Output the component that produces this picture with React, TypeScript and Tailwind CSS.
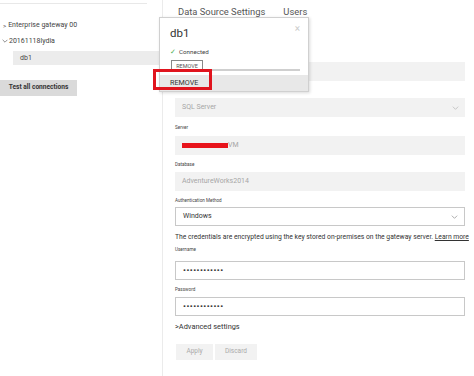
import React from 'react';

const Chevron = ({ className }: { className?: string }) => (
  <svg viewBox="0 0 10 6" className={className} fill="none" stroke="currentColor" strokeWidth="1.2">
    <path d="M1 1l4 4 4-4" />
  </svg>
);

const Label = ({ text, className }: { text: string; className?: string }) => (
  <div className={`h-[10px] text-[4.6px] leading-[10px] text-[#444] ${className ?? ''}`}>{text}</div>
);

const GrayField = ({ children, className }: { children?: React.ReactNode; className?: string }) => (
  <div className={`h-[19px] w-[290px] shrink-0 bg-[#f2f2f2] flex items-center pl-[7px] text-[7px] text-[#a6a6a6] ${className ?? ''}`}>
    {children}
  </div>
);

const WhiteField = ({ children, className }: { children?: React.ReactNode; className?: string }) => (
  <div className={`h-[19px] w-[290px] shrink-0 bg-white border border-[#c8c8c8] flex items-center pl-[7px] text-[7px] text-[#333] ${className ?? ''}`}>
    {children}
  </div>
);

const App = () => {
  return (
    <div className="relative w-[474px] h-[376px] bg-white overflow-hidden flex font-['Roboto',sans-serif]">
      {/* gateway tree */}
      <div className="w-[163px] shrink-0 h-full border-r border-[#ebebeb] flex flex-col">
        <div className="mt-[3px] h-px w-[147px] bg-[#e8e8e8]" />
        <div className="mt-[15px] flex items-center h-[12px] pl-[3px] text-[7px] text-[#444]">
          <span className="mr-[2px] text-[6px]">&gt;</span>Enterprise gateway 00
        </div>
        <div className="mt-[4px] flex items-center h-[12px] pl-[2px] text-[7px] text-[#444]">
          <Chevron className="w-[6px] h-[4px] mr-[1px] text-[#666]" />20161118lydia
        </div>
        <div className="mt-[4px] ml-[13px] h-[14px] bg-[#ececec] flex items-center pl-[7px] text-[7px] text-[#444]">db1</div>
        <div className="mt-[15px] w-[77px] h-[16px] bg-[#dadada] flex items-center justify-center text-[6.6px] font-bold text-[#333]">
          Test all connections
        </div>
      </div>

      {/* settings */}
      <div className="flex flex-col pl-[12px]">
        <div className="mt-[3px] ml-[3px] flex gap-[18px] text-[9.4px] leading-[18px] text-[#555]">
          <span>Data Source Settings</span>
          <span>Users</span>
        </div>
        {/* name field, covered by the flyout */}
        <GrayField className="mt-[41px]" />
        <Label text="Data Source Type" className="mt-[4px]" />
        <GrayField className="mt-[3px] justify-between pr-[6px]">
          SQL Server
          <Chevron className="w-[7px] h-[4px] text-[#bbb]" />
        </GrayField>
        <Label text="Server" className="mt-[6px]" />
        <GrayField className="mt-[3px]">
          <span className="w-[46px] h-[5px] bg-[#e8141c]" />
          <span>VM</span>
        </GrayField>
        <Label text="Database" className="mt-[5px]" />
        <GrayField className="mt-[2px]">AdventureWorks2014</GrayField>
        <Label text="Authentication Method" className="mt-[5px]" />
        <WhiteField className="mt-[1px] justify-between pr-[6px]">
          Windows
          <Chevron className="w-[7px] h-[4px] text-[#999]" />
        </WhiteField>
        <div className="mt-[6px] h-[10px] text-[6.75px] leading-[10px] text-[#333] whitespace-nowrap">
          The credentials are encrypted using the key stored on-premises on the gateway server. <span className="underline">Learn more</span>
        </div>
        <Label text="Username" className="mt-[3px]" />
        <WhiteField className="mt-[6px] tracking-[0.5px] text-[8px] font-bold">••••••••••••</WhiteField>
        <Label text="Password" className="mt-[5px]" />
        <WhiteField className="mt-[2px] tracking-[0.5px] text-[8px] font-bold">••••••••••••</WhiteField>
        <div className="mt-[6px] h-[10px] text-[7.4px] leading-[10px] text-[#333]">&gt;Advanced settings</div>
        <div className="mt-[12px] ml-[1px] flex gap-[2px]">
          <div className="w-[37px] h-[16px] bg-[#f2f2f2] flex items-center justify-center text-[6.5px] text-[#aaa]">Apply</div>
          <div className="w-[42px] h-[16px] bg-[#f2f2f2] flex items-center justify-center text-[6.5px] text-[#aaa]">Discard</div>
        </div>
      </div>

      {/* connection flyout */}
      <div className="absolute left-[159px] top-[17px] w-[150px] h-[75px] bg-white border border-[#d0d0d0] shadow-[1px_1px_3px_rgba(0,0,0,0.15)] flex flex-col">
        <div className="flex justify-between items-start pl-[10px] pr-[8px]">
          <span className="mt-[8px] text-[11.5px] leading-[14px] text-[#333]">db1</span>
          <span className="mt-[6px] text-[10px] leading-[10px] text-[#ccc]">×</span>
        </div>
        <div className="mt-[8px] pl-[10px] flex items-center gap-[3px] text-[6.2px] leading-[8px] text-[#444]">
          <span className="text-[#4caf50] text-[7px]">✓</span>Connected
        </div>
        <div className="mt-[4px] pl-[11px] flex items-end">
          <div className="w-[32px] h-[12px] border border-[#888] flex items-center justify-center text-[5.5px] text-[#555]">REMOVE</div>
          <div className="mb-[1px] w-[97px] h-[2px] bg-[#cfcfcf]" />
        </div>
        <div className="mt-[3px] h-[19px] bg-[#e8e8e8] flex items-center pl-[10px] text-[7.2px] text-[#333]">REMOVE</div>
      </div>
      <div className="absolute left-[153px] top-[69px] w-[59px] h-[21px] border-[3px] border-[#e0141e]" />
    </div>
  );
};

export default App;
